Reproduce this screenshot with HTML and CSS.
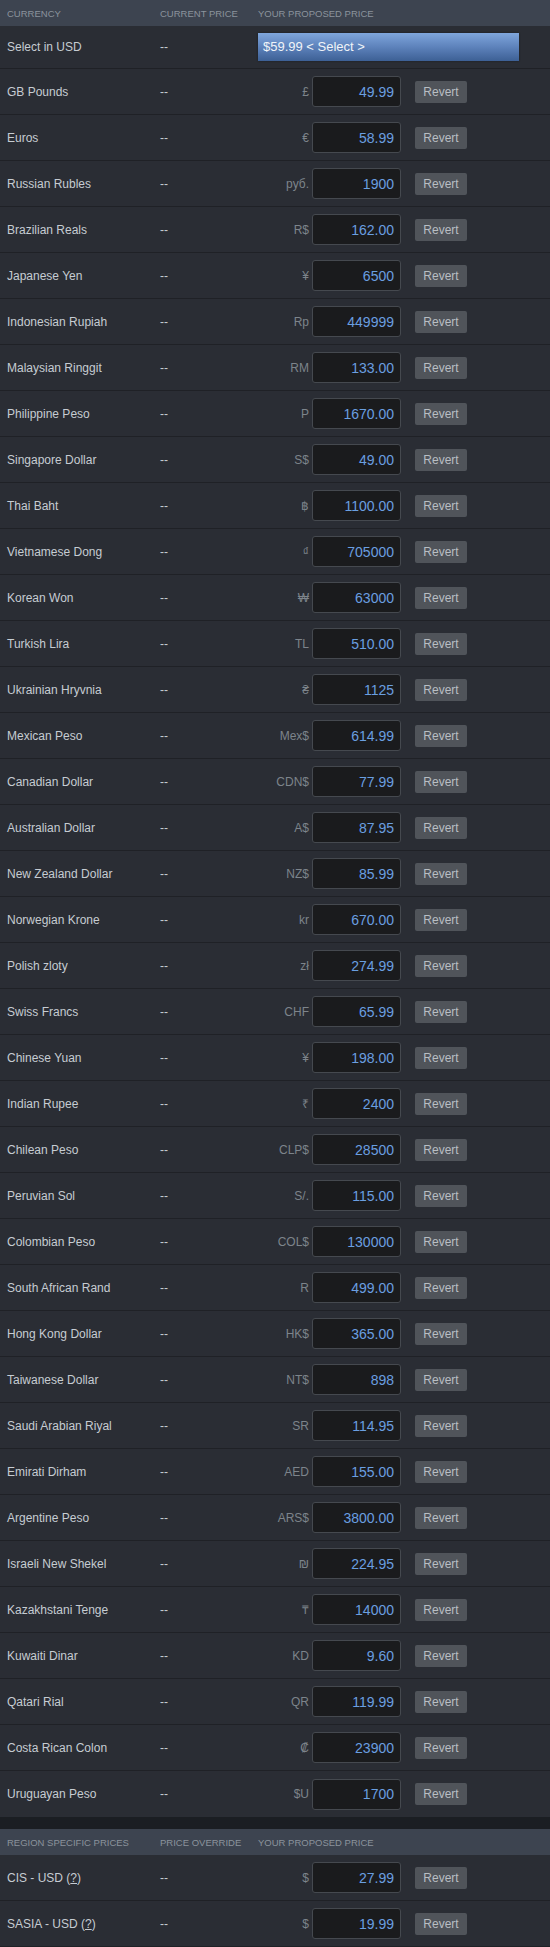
FILE: index.html
```html
<!DOCTYPE html>
<html>
<head>
<meta charset="utf-8">
<link rel="stylesheet" href="styles.css">
</head>
<body>
<div class="pricing">
  <div class="row head">
    <div class="c1">Currency</div>
    <div class="c2">Current Price</div>
    <div class="c3">Your Proposed Price</div>
  </div>
  <div class="row first">
    <div class="c1">Select in USD</div>
    <div class="c2">--</div>
    <div class="c3"><div class="select">$59.99 &lt; Select &gt;</div></div>
  </div>
  <div class="row"><div class="c1">GB Pounds</div><div class="c2">--</div><div class="c3"><span class="sym">£</span><input class="price" value="49.99"><button class="revert">Revert</button></div></div>
  <div class="row"><div class="c1">Euros</div><div class="c2">--</div><div class="c3"><span class="sym">€</span><input class="price" value="58.99"><button class="revert">Revert</button></div></div>
  <div class="row"><div class="c1">Russian Rubles</div><div class="c2">--</div><div class="c3"><span class="sym">руб.</span><input class="price" value="1900"><button class="revert">Revert</button></div></div>
  <div class="row"><div class="c1">Brazilian Reals</div><div class="c2">--</div><div class="c3"><span class="sym">R$</span><input class="price" value="162.00"><button class="revert">Revert</button></div></div>
  <div class="row"><div class="c1">Japanese Yen</div><div class="c2">--</div><div class="c3"><span class="sym">¥</span><input class="price" value="6500"><button class="revert">Revert</button></div></div>
  <div class="row"><div class="c1">Indonesian Rupiah</div><div class="c2">--</div><div class="c3"><span class="sym">Rp</span><input class="price" value="449999"><button class="revert">Revert</button></div></div>
  <div class="row"><div class="c1">Malaysian Ringgit</div><div class="c2">--</div><div class="c3"><span class="sym">RM</span><input class="price" value="133.00"><button class="revert">Revert</button></div></div>
  <div class="row"><div class="c1">Philippine Peso</div><div class="c2">--</div><div class="c3"><span class="sym">P</span><input class="price" value="1670.00"><button class="revert">Revert</button></div></div>
  <div class="row"><div class="c1">Singapore Dollar</div><div class="c2">--</div><div class="c3"><span class="sym">S$</span><input class="price" value="49.00"><button class="revert">Revert</button></div></div>
  <div class="row"><div class="c1">Thai Baht</div><div class="c2">--</div><div class="c3"><span class="sym">฿</span><input class="price" value="1100.00"><button class="revert">Revert</button></div></div>
  <div class="row"><div class="c1">Vietnamese Dong</div><div class="c2">--</div><div class="c3"><span class="sym">₫</span><input class="price" value="705000"><button class="revert">Revert</button></div></div>
  <div class="row"><div class="c1">Korean Won</div><div class="c2">--</div><div class="c3"><span class="sym">₩</span><input class="price" value="63000"><button class="revert">Revert</button></div></div>
  <div class="row"><div class="c1">Turkish Lira</div><div class="c2">--</div><div class="c3"><span class="sym">TL</span><input class="price" value="510.00"><button class="revert">Revert</button></div></div>
  <div class="row"><div class="c1">Ukrainian Hryvnia</div><div class="c2">--</div><div class="c3"><span class="sym">₴</span><input class="price" value="1125"><button class="revert">Revert</button></div></div>
  <div class="row"><div class="c1">Mexican Peso</div><div class="c2">--</div><div class="c3"><span class="sym">Mex$</span><input class="price" value="614.99"><button class="revert">Revert</button></div></div>
  <div class="row"><div class="c1">Canadian Dollar</div><div class="c2">--</div><div class="c3"><span class="sym">CDN$</span><input class="price" value="77.99"><button class="revert">Revert</button></div></div>
  <div class="row"><div class="c1">Australian Dollar</div><div class="c2">--</div><div class="c3"><span class="sym">A$</span><input class="price" value="87.95"><button class="revert">Revert</button></div></div>
  <div class="row"><div class="c1">New Zealand Dollar</div><div class="c2">--</div><div class="c3"><span class="sym">NZ$</span><input class="price" value="85.99"><button class="revert">Revert</button></div></div>
  <div class="row"><div class="c1">Norwegian Krone</div><div class="c2">--</div><div class="c3"><span class="sym">kr</span><input class="price" value="670.00"><button class="revert">Revert</button></div></div>
  <div class="row"><div class="c1">Polish zloty</div><div class="c2">--</div><div class="c3"><span class="sym">zł</span><input class="price" value="274.99"><button class="revert">Revert</button></div></div>
  <div class="row"><div class="c1">Swiss Francs</div><div class="c2">--</div><div class="c3"><span class="sym">CHF</span><input class="price" value="65.99"><button class="revert">Revert</button></div></div>
  <div class="row"><div class="c1">Chinese Yuan</div><div class="c2">--</div><div class="c3"><span class="sym">¥</span><input class="price" value="198.00"><button class="revert">Revert</button></div></div>
  <div class="row"><div class="c1">Indian Rupee</div><div class="c2">--</div><div class="c3"><span class="sym">₹</span><input class="price" value="2400"><button class="revert">Revert</button></div></div>
  <div class="row"><div class="c1">Chilean Peso</div><div class="c2">--</div><div class="c3"><span class="sym">CLP$</span><input class="price" value="28500"><button class="revert">Revert</button></div></div>
  <div class="row"><div class="c1">Peruvian Sol</div><div class="c2">--</div><div class="c3"><span class="sym">S/.</span><input class="price" value="115.00"><button class="revert">Revert</button></div></div>
  <div class="row"><div class="c1">Colombian Peso</div><div class="c2">--</div><div class="c3"><span class="sym">COL$</span><input class="price" value="130000"><button class="revert">Revert</button></div></div>
  <div class="row"><div class="c1">South African Rand</div><div class="c2">--</div><div class="c3"><span class="sym">R</span><input class="price" value="499.00"><button class="revert">Revert</button></div></div>
  <div class="row"><div class="c1">Hong Kong Dollar</div><div class="c2">--</div><div class="c3"><span class="sym">HK$</span><input class="price" value="365.00"><button class="revert">Revert</button></div></div>
  <div class="row"><div class="c1">Taiwanese Dollar</div><div class="c2">--</div><div class="c3"><span class="sym">NT$</span><input class="price" value="898"><button class="revert">Revert</button></div></div>
  <div class="row"><div class="c1">Saudi Arabian Riyal</div><div class="c2">--</div><div class="c3"><span class="sym">SR</span><input class="price" value="114.95"><button class="revert">Revert</button></div></div>
  <div class="row"><div class="c1">Emirati Dirham</div><div class="c2">--</div><div class="c3"><span class="sym">AED</span><input class="price" value="155.00"><button class="revert">Revert</button></div></div>
  <div class="row"><div class="c1">Argentine Peso</div><div class="c2">--</div><div class="c3"><span class="sym">ARS$</span><input class="price" value="3800.00"><button class="revert">Revert</button></div></div>
  <div class="row"><div class="c1">Israeli New Shekel</div><div class="c2">--</div><div class="c3"><span class="sym">₪</span><input class="price" value="224.95"><button class="revert">Revert</button></div></div>
  <div class="row"><div class="c1">Kazakhstani Tenge</div><div class="c2">--</div><div class="c3"><span class="sym">₸</span><input class="price" value="14000"><button class="revert">Revert</button></div></div>
  <div class="row"><div class="c1">Kuwaiti Dinar</div><div class="c2">--</div><div class="c3"><span class="sym">KD</span><input class="price" value="9.60"><button class="revert">Revert</button></div></div>
  <div class="row"><div class="c1">Qatari Rial</div><div class="c2">--</div><div class="c3"><span class="sym">QR</span><input class="price" value="119.99"><button class="revert">Revert</button></div></div>
  <div class="row"><div class="c1">Costa Rican Colon</div><div class="c2">--</div><div class="c3"><span class="sym">₡</span><input class="price" value="23900"><button class="revert">Revert</button></div></div>
  <div class="row last"><div class="c1">Uruguayan Peso</div><div class="c2">--</div><div class="c3"><span class="sym">$U</span><input class="price" value="1700"><button class="revert">Revert</button></div></div>
</div>
<div class="spacer"></div>
<div class="pricing">
  <div class="row head">
    <div class="c1">Region Specific Prices</div>
    <div class="c2">Price Override</div>
    <div class="c3">Your Proposed Price</div>
  </div>
  <div class="row"><div class="c1">CIS - USD (<span class="help">?</span>)</div><div class="c2">--</div><div class="c3"><span class="sym">$</span><input class="price" value="27.99"><button class="revert">Revert</button></div></div>
  <div class="row"><div class="c1">SASIA - USD (<span class="help">?</span>)</div><div class="c2">--</div><div class="c3"><span class="sym">$</span><input class="price" value="19.99"><button class="revert">Revert</button></div></div>
</div>
</body>
</html>
```
FILE: styles.css
```css
html, body {
  margin: 0;
  padding: 0;
  background: #1b1e23;
}
body {
  width: 550px;
  font-family: "Liberation Sans", Arial, sans-serif;
  color: #c6ccd2;
}
.pricing {
  background: #2a2d34;
}
.row {
  display: grid;
  grid-template-columns: 153px 98px 1fr;
  align-items: center;
  padding-left: 7px;
  height: 45px;
  border-bottom: 1px solid #1f2126;
  font-size: 12px;
}
.row.first {
  height: 42px;
}
.row.last {
  border-bottom: none;
  height: 46px;
}
.row.head {
  height: 26px;
  background: #3d4450;
  border-bottom: none;
  font-size: 9.5px;
  text-transform: uppercase;
  color: #8b939c;
}
.c3 {
  display: flex;
  align-items: center;
}
.select {
  width: 261px;
  height: 28px;
  line-height: 28px;
  padding-left: 5px;
  box-sizing: border-box;
  font-size: 13px;
  color: #f0f4f8;
  background: linear-gradient(to bottom, #7fa6dc 0%, #5d82bb 50%, #3d6095 100%);
  box-shadow: 0 0 2px rgba(0,0,0,0.4);
}
.sym {
  width: 51px;
  text-align: right;
  color: #7d848b;
  font-size: 12px;
  margin-right: 3px;
}
.price {
  width: 89px;
  height: 31px;
  box-sizing: border-box;
  background: #1a1b1d;
  border: 1px solid #45494f;
  border-radius: 3px;
  color: #6a9fe0;
  font-family: "Liberation Sans", Arial, sans-serif;
  font-size: 14px;
  text-align: right;
  padding: 0 6px 0 4px;
  margin: 0;
  outline: none;
}
.revert {
  margin-left: 14px;
  width: 52px;
  height: 22px;
  padding: 0;
  border: none;
  border-radius: 2px;
  background: #50545a;
  color: #b9bec3;
  font-family: "Liberation Sans", Arial, sans-serif;
  font-size: 12px;
}
.spacer {
  height: 12px;
  background: #1b1e23;
}
.help {
  text-decoration: underline;
}
```
